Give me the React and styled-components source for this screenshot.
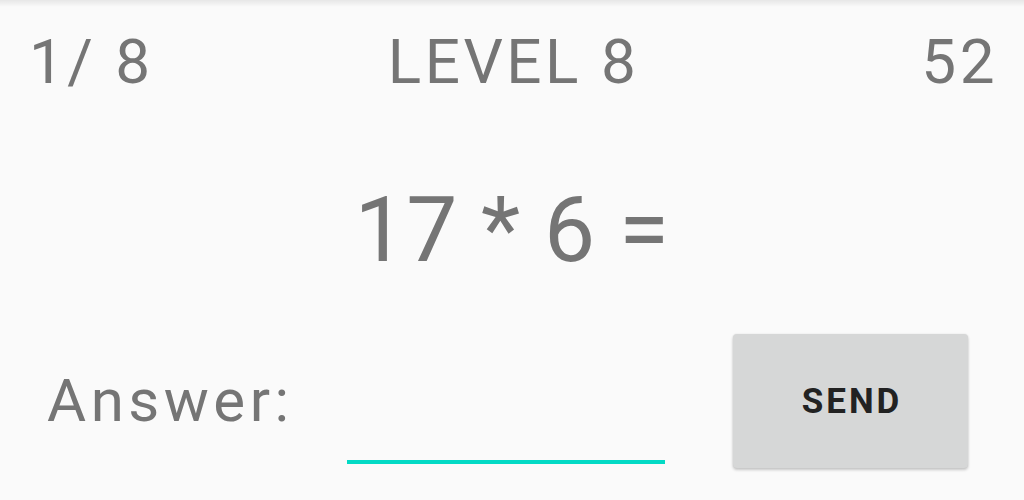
import styled, { createGlobalStyle } from 'styled-components';

const GlobalStyle = createGlobalStyle`
  html, body {
    margin: 0;
    padding: 0;
    background: #fafafa;
  }
  body {
    font-family: Roboto, "Liberation Sans", sans-serif;
  }
`;

const Screen = styled.div`
  width: 1024px;
  height: 500px;
  overflow: hidden;
  box-sizing: border-box;
  padding-top: 31px;
  background: linear-gradient(to bottom, rgba(0, 0, 0, 0.08) 0, rgba(0, 0, 0, 0) 7px) no-repeat, #fafafa;
  color: #757575;
`;

const StatusBar = styled.div`
  display: grid;
  grid-template-columns: 1fr auto 1fr;
  align-items: center;
  padding: 0 26px 0 29px;
  font-size: 62px;
  line-height: 62px;
  letter-spacing: 3.5px;
`;

const Stat = styled.div`
  text-align: ${(p) => p.align || 'left'};
`;

const Question = styled.div`
  margin-top: 92px;
  text-align: center;
  font-size: 91px;
  line-height: 91px;
  letter-spacing: 0.6px;
`;

const AnswerRow = styled.div`
  display: flex;
  align-items: center;
  margin-top: 58px;
  padding-left: 47px;
`;

const Label = styled.span`
  width: 300px;
  font-size: 60px;
  line-height: 60px;
  letter-spacing: 4.5px;
`;

const AnswerInput = styled.input`
  width: 318px;
  height: 126px;
  box-sizing: border-box;
  border: none;
  border-bottom: 4px solid #03dac5;
  background: transparent;
  outline: none;
  font-family: inherit;
  font-size: 60px;
  color: #212121;
  padding: 0;
`;

const SendButton = styled.button`
  margin-left: 68px;
  width: 235px;
  height: 134px;
  border: none;
  border-radius: 4px;
  background: #d6d7d7;
  box-shadow: 0 2px 3px rgba(0, 0, 0, 0.2), 0 0 2px rgba(0, 0, 0, 0.1);
  font-family: Roboto, "Liberation Sans", sans-serif;
  font-weight: 700;
  font-size: 35px;
  letter-spacing: 3px;
  text-indent: 3px;
  color: #222;
  cursor: pointer;
`;

function App() {
  return (
    <>
      <GlobalStyle />
      <Screen>
        <StatusBar>
          <Stat>1/ 8</Stat>
          <Stat align="center">LEVEL 8</Stat>
          <Stat align="right">52</Stat>
        </StatusBar>
        <Question>17 * 6 =</Question>
        <AnswerRow>
          <Label>Answer:</Label>
          <AnswerInput type="text" />
          <SendButton>SEND</SendButton>
        </AnswerRow>
      </Screen>
    </>
  );
}

export default App;
